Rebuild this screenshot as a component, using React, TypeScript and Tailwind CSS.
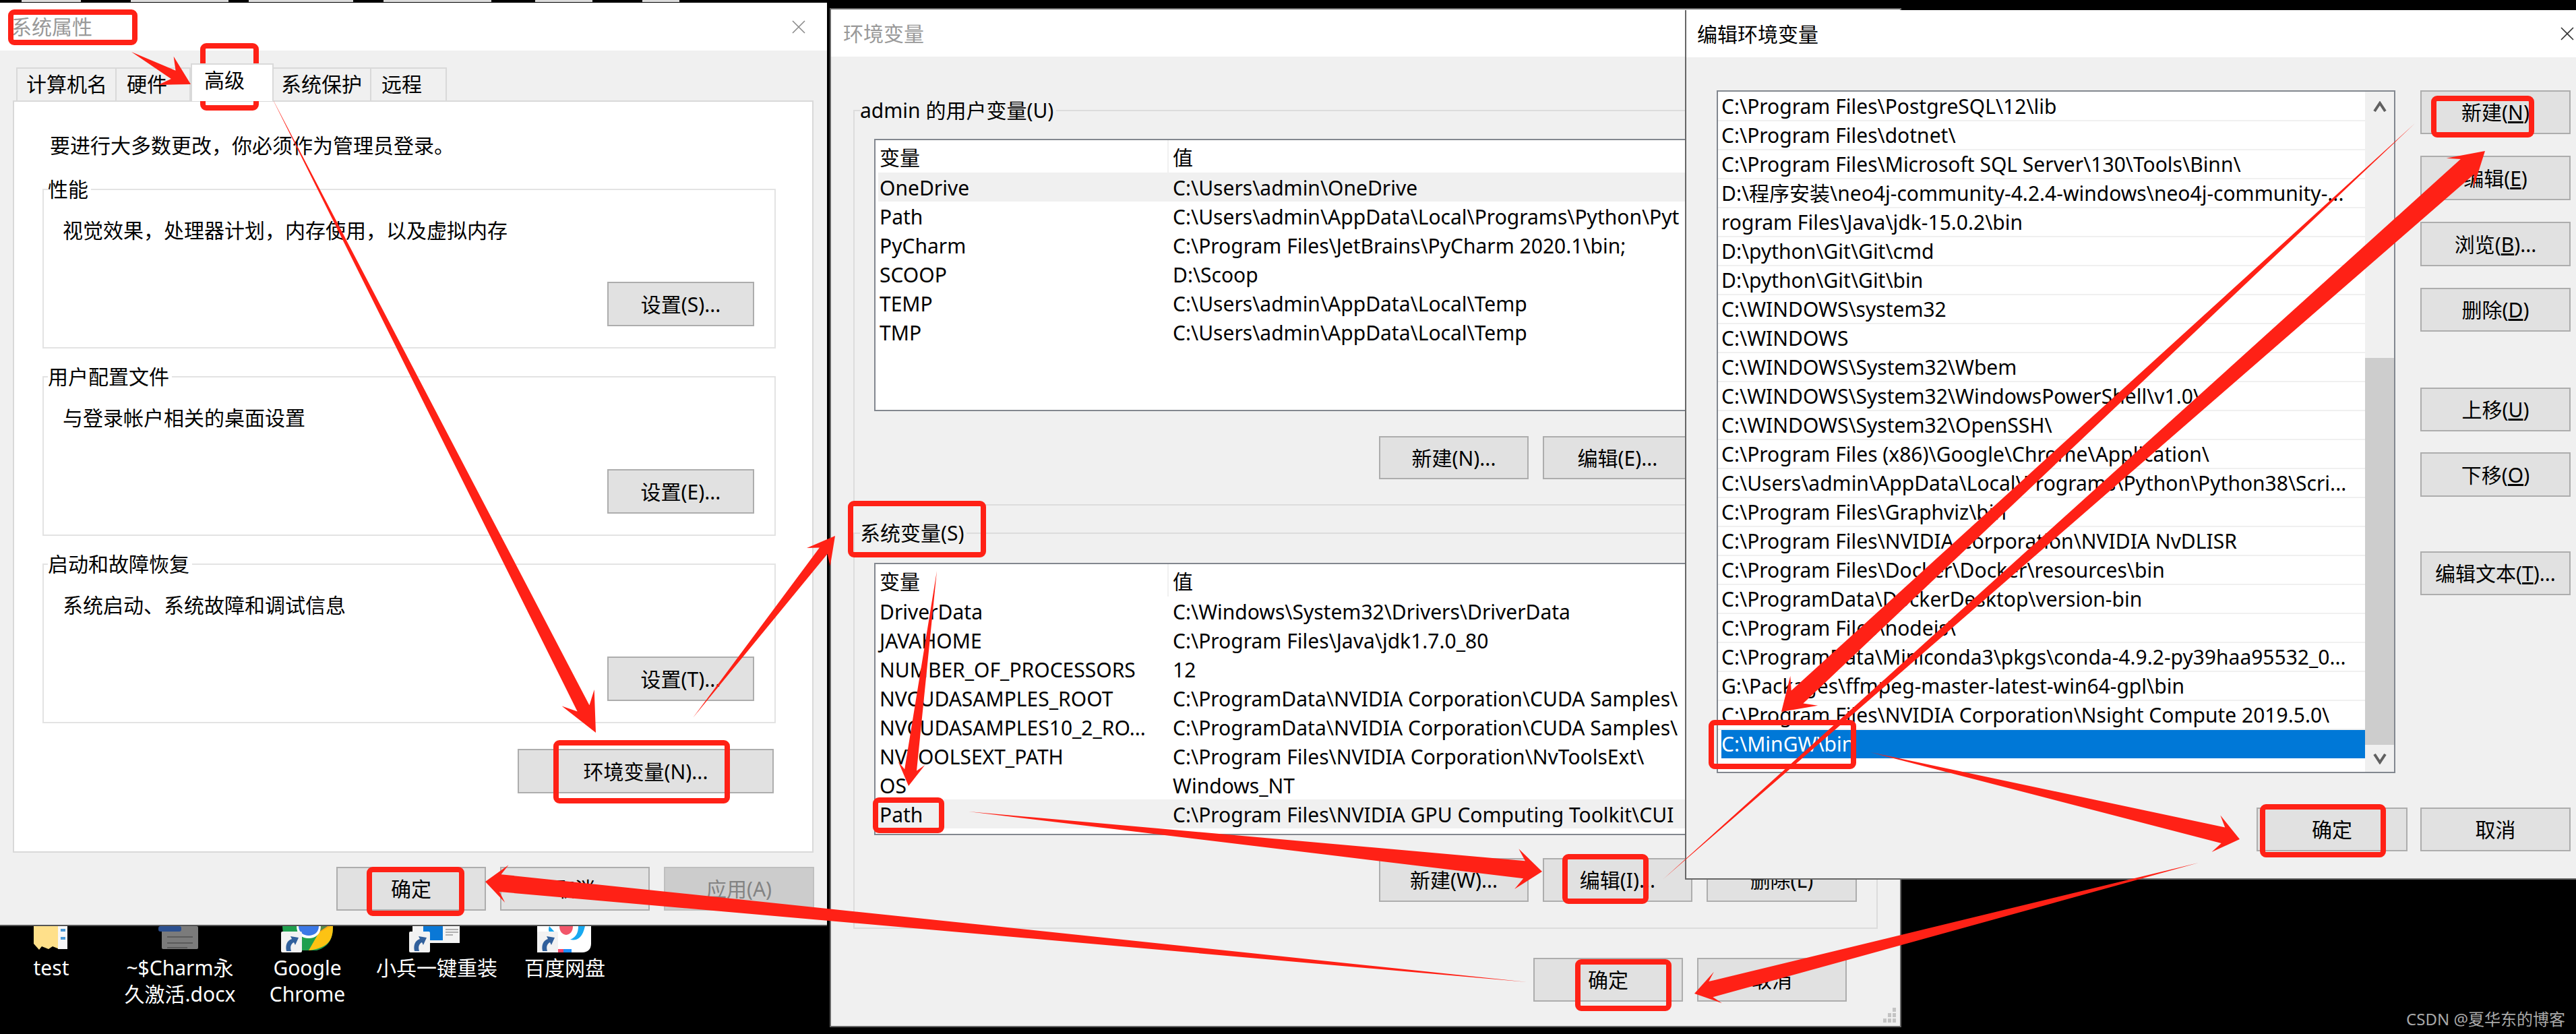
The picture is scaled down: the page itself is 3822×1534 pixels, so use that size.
import React from "react";

const RED = "#ff2116";

const Btn = ({ children, className = "", disabled = false }: { children: React.ReactNode; className?: string; disabled?: boolean }) => (
  <div
    className={`flex items-center justify-center shrink-0 border-2 whitespace-nowrap ${
      disabled ? "bg-[#cccccc] border-[#bfbfbf] text-[#838383]" : "bg-[#e1e1e1] border-[#adadad] text-black"
    } ${className}`}
  >
    {children}
  </div>
);

const Close = ({ className = "", color = "#8a8a8a" }: { className?: string; color?: string }) => (
  <svg viewBox="0 0 20 20" className={`w-5 h-5 ${className}`} fill="none" stroke={color} strokeWidth="1.6">
    <path d="M1 1 L19 19 M19 1 L1 19" />
  </svg>
);

const Group = ({ label, text, btn }: { label: string; text: string; btn: string }) => (
  <div className="relative h-[237px] w-[1088px] ml-[42px] border-2 border-[#e3e3e3] pt-[40px] pl-[28px] pr-[30px]">
    <div className="absolute -top-[23px] left-[6px] bg-white pr-1 leading-[44px] h-[44px]">{label}</div>
    <div className="leading-[40px] h-[40px]">{text}</div>
    <div className="flex justify-end mt-[56px]">
      <Btn className="w-[218px] h-[66px]">{btn}</Btn>
    </div>
  </div>
);

const SystemProps = () => (
  <div className="absolute left-0 top-[4px] w-[1227px] h-[1370px] bg-[#f0f0f0] border-b-2 border-[#555] flex flex-col">
    <div className="h-[71px] bg-white flex items-center justify-between pl-[17px] pr-[32px] text-[#999]">
      <span>系统属性</span>
      <Close />
    </div>
    <div className="flex mt-[25px] pl-[24px] h-[49px] items-end">
      <div className="w-[149px] h-[49px] border-2 border-b-0 border-[#d9d9d9] pl-[13px] leading-[46px]">计算机名</div>
      <div className="w-[110px] h-[49px] border-t-2 border-r-2 border-[#d9d9d9] pl-[15px] leading-[46px]">硬件</div>
      <div className="w-[123px] h-[56px] -mb-[1px] z-10 bg-white border-2 border-b-0 border-[#d9d9d9] pl-[18px] leading-[46px]">高级</div>
      <div className="w-[145px] h-[49px] border-t-2 border-r-2 border-[#d9d9d9] pl-[11px] leading-[46px]">系统保护</div>
      <div className="w-[112px] h-[49px] border-t-2 border-r-2 border-[#d9d9d9] pl-[15px] leading-[46px]">远程</div>
    </div>
    <div className="ml-[19px] w-[1188px] h-[1116px] bg-white border-2 border-[#d9d9d9] flex flex-col">
      <div className="mt-[43px] ml-[53px] h-[44px] leading-[44px]">要进行大多数更改，你必须作为管理员登录。</div>
      <div className="mt-[42px] flex flex-col gap-[41px]">
        <Group label="性能" text="视觉效果，处理器计划，内存使用，以及虚拟内存" btn="设置(S)..." />
        <Group label="用户配置文件" text="与登录帐户相关的桌面设置" btn="设置(E)..." />
        <Group label="启动和故障恢复" text="系统启动、系统故障和调试信息" btn="设置(T)..." />
      </div>
      <div className="flex justify-end mt-[38px] pr-[57px]">
        <Btn className="w-[380px] h-[66px]">环境变量(N)...</Btn>
      </div>
    </div>
    <div className="flex justify-end gap-[21px] mt-[21px] pr-[19px]">
      <Btn className="w-[222px] h-[65px]">确定</Btn>
      <Btn className="w-[222px] h-[65px]">取消</Btn>
      <Btn className="w-[223px] h-[65px]" disabled>应用(A)</Btn>
    </div>
  </div>
);

const VarTable = ({ rows, active }: { rows: [string, string][]; active: number }) => (
  <div className="ml-[29px] w-[1460px] h-[404px] bg-white border-2 border-[#82878f] overflow-hidden">
    <div className="flex h-[48px] leading-[52px]">
      <div className="w-[435px] pl-[6px] border-r-2 border-[#f0f0f0]">变量</div>
      <div className="pl-[6px]">值</div>
    </div>
    {rows.map(([name, value], i) => (
      <div key={name} className={`flex h-[43px] leading-[45px] ml-[4px] whitespace-nowrap ${i === active ? "bg-[#f0f0f0]" : ""}`}>
        <div className="w-[433px] pl-[2px] shrink-0">{name}</div>
        <div className="pl-[4px]">{value}</div>
      </div>
    ))}
  </div>
);

const userVars: [string, string][] = [
  ["OneDrive", "C:\\Users\\admin\\OneDrive"],
  ["Path", "C:\\Users\\admin\\AppData\\Local\\Programs\\Python\\Pyt"],
  ["PyCharm", "C:\\Program Files\\JetBrains\\PyCharm 2020.1\\bin;"],
  ["SCOOP", "D:\\Scoop"],
  ["TEMP", "C:\\Users\\admin\\AppData\\Local\\Temp"],
  ["TMP", "C:\\Users\\admin\\AppData\\Local\\Temp"],
];

const sysVars: [string, string][] = [
  ["DriverData", "C:\\Windows\\System32\\Drivers\\DriverData"],
  ["JAVAHOME", "C:\\Program Files\\Java\\jdk1.7.0_80"],
  ["NUMBER_OF_PROCESSORS", "12"],
  ["NVCUDASAMPLES_ROOT", "C:\\ProgramData\\NVIDIA Corporation\\CUDA Samples\\"],
  ["NVCUDASAMPLES10_2_RO...", "C:\\ProgramData\\NVIDIA Corporation\\CUDA Samples\\"],
  ["NVTOOLSEXT_PATH", "C:\\Program Files\\NVIDIA Corporation\\NvToolsExt\\"],
  ["OS", "Windows_NT"],
  ["Path", "C:\\Program Files\\NVIDIA GPU Computing Toolkit\\CUI"],
];

const EnvVars = () => (
  <div className="absolute left-[1233px] top-[14px] w-[1586px] h-[1508px] bg-[#f0f0f0] flex flex-col outline-2 outline-[#666]">
    <div className="h-[70px] bg-white flex items-center pl-[18px] text-[#999]">环境变量</div>
    <div className="relative ml-[33px] mt-[79px] w-[1520px] h-[587px] border-2 border-[#dcdcdc] pt-[41px]">
      <div className="absolute -top-[23px] left-[8px] bg-[#f0f0f0] pr-1 h-[44px] leading-[44px]">admin 的用户变量(U)</div>
      <VarTable rows={userVars} active={0} />
      <div className="flex gap-[21px] mt-[37px] pl-[778px]">
        <Btn className="w-[222px] h-[64px]">新建(N)...</Btn>
        <Btn className="w-[222px] h-[64px]">编辑(E)...</Btn>
      </div>
    </div>
    <div className="relative ml-[33px] mt-[40px] w-[1520px] h-[588px] border-2 border-[#dcdcdc] pt-[43px]">
      <div className="absolute -top-[23px] left-[8px] bg-[#f0f0f0] pr-1 h-[44px] leading-[44px]">系统变量(S)</div>
      <VarTable rows={sysVars} active={7} />
      <div className="flex gap-[21px] mt-[34px] pl-[778px]">
        <Btn className="w-[222px] h-[65px]">新建(W)...</Btn>
        <Btn className="w-[222px] h-[65px]">编辑(I)...</Btn>
        <Btn className="w-[223px] h-[65px]">删除(L)</Btn>
      </div>
    </div>
    <div className="flex justify-end gap-[21px] mt-[43px] pr-[79px]">
      <Btn className="w-[222px] h-[65px]">确定</Btn>
      <Btn className="w-[222px] h-[65px]">取消</Btn>
    </div>
    <svg viewBox="0 0 24 24" className="absolute right-[3px] bottom-[3px] w-[24px] h-[24px]" fill="#c4c4c4">
      <rect x="16" y="0" width="5" height="6" />
      <rect x="9" y="8" width="5" height="6" />
      <rect x="16" y="8" width="5" height="6" />
      <rect x="2" y="16" width="5" height="6" />
      <rect x="9" y="16" width="5" height="6" />
      <rect x="16" y="16" width="5" height="6" />
    </svg>
  </div>
);

const pathRows = [
  "C:\\Program Files\\PostgreSQL\\12\\lib",
  "C:\\Program Files\\dotnet\\",
  "C:\\Program Files\\Microsoft SQL Server\\130\\Tools\\Binn\\",
  "D:\\程序安装\\neo4j-community-4.2.4-windows\\neo4j-community-...",
  "rogram Files\\Java\\jdk-15.0.2\\bin",
  "D:\\python\\Git\\Git\\cmd",
  "D:\\python\\Git\\Git\\bin",
  "C:\\WINDOWS\\system32",
  "C:\\WINDOWS",
  "C:\\WINDOWS\\System32\\Wbem",
  "C:\\WINDOWS\\System32\\WindowsPowerShell\\v1.0\\",
  "C:\\WINDOWS\\System32\\OpenSSH\\",
  "C:\\Program Files (x86)\\Google\\Chrome\\Application\\",
  "C:\\Users\\admin\\AppData\\Local\\Programs\\Python\\Python38\\Scri...",
  "C:\\Program Files\\Graphviz\\bin",
  "C:\\Program Files\\NVIDIA Corporation\\NVIDIA NvDLISR",
  "C:\\Program Files\\Docker\\Docker\\resources\\bin",
  "C:\\ProgramData\\DockerDesktop\\version-bin",
  "C:\\Program Files\\nodejs\\",
  "C:\\ProgramData\\Miniconda3\\pkgs\\conda-4.9.2-py39haa95532_0...",
  "G:\\Packages\\ffmpeg-master-latest-win64-gpl\\bin",
  "C:\\Program Files\\NVIDIA Corporation\\Nsight Compute 2019.5.0\\",
  "C:\\MinGW\\bin",
];

const EditEnv = () => (
  <div className="absolute left-[2500px] top-[15px] w-[1322px] h-[1290px] bg-[#f0f0f0] border-l-2 border-b-2 border-[#666] flex flex-col">
    <div className="h-[70px] bg-white flex items-center justify-between pl-[16px] pr-[3px]">
      <span>编辑环境变量</span>
      <Close color="#333" />
    </div>
    <div className="flex mt-[49px] pl-[45px] gap-[37px] items-start">
      <div className="w-[1007px] h-[1013px] bg-white border-2 border-[#82878f] flex">
        <div className="flex-1 pt-[1px] overflow-hidden">
          {pathRows.map((row, i) => (
            <div
              key={row}
              className={
                i === pathRows.length - 1
                  ? "h-[42px] leading-[42px] ml-[5px] bg-[#0078d7] text-white whitespace-nowrap"
                  : "h-[43px] leading-[42px] pl-[5px] border-b-2 border-[#f0f0f0] whitespace-nowrap"
              }
            >
              {row}
            </div>
          ))}
        </div>
        <div className="w-[43px] bg-[#f0f0f0] flex flex-col items-center shrink-0">
          <svg viewBox="0 0 20 16" className="w-[20px] h-[16px] mt-[14px] mb-[365px] shrink-0" fill="none" stroke="#606060" strokeWidth="4">
            <path d="M2 15 L10 3 L18 15" />
          </svg>
          <div className="w-full h-[574px] bg-[#cdcdcd] shrink-0" />
          <svg viewBox="0 0 20 16" className="w-[20px] h-[16px] mt-[13px] shrink-0" fill="none" stroke="#606060" strokeWidth="4">
            <path d="M2 1 L10 13 L18 1" />
          </svg>
        </div>
      </div>
      <div className="flex flex-col w-[223px]">
        <Btn className="h-[65px]">新建(<u>N</u>)</Btn>
        <Btn className="h-[66px] mt-[32px]">编辑(<u>E</u>)</Btn>
        <Btn className="h-[66px] mt-[32px]">浏览(<u>B</u>)...</Btn>
        <Btn className="h-[65px] mt-[32px]">删除(<u>D</u>)</Btn>
        <Btn className="h-[65px] mt-[83px]">上移(<u>U</u>)</Btn>
        <Btn className="h-[66px] mt-[31px]">下移(<u>O</u>)</Btn>
        <Btn className="h-[65px] mt-[81px]">编辑文本(<u>T</u>)...</Btn>
      </div>
    </div>
    <div className="flex justify-end gap-[19px] mt-[51px] pr-[8px]">
      <Btn className="w-[224px] h-[65px]">确定</Btn>
      <Btn className="w-[223px] h-[65px]">取消</Btn>
    </div>
  </div>
);

const Shortcut = ({ x, y }: { x: number; y: number }) => (
  <g transform={`translate(${x} ${y})`}>
    <rect width="31" height="31" rx="2" fill="#f2f2f2" />
    <path d="M8 29 C6 20 9 13 16 11 L14 7 L26 9 L21 20 L19 16 C15 18 13 22 15 29 Z" fill="#31609c" />
  </g>
);

const DesktopIcons = () => (
  <svg viewBox="0 0 900 60" className="absolute left-0 top-[1370px] w-[900px] h-[60px]">
    {/* folder */}
    <path d="M50 4 H88 V38 L78 34 L72 38 L62 34 L58 39 L50 30 Z" fill="#ffe08a" />
    <rect x="86" y="4" width="14" height="34" fill="#f7f7f7" />
    <rect x="90" y="8" width="7" height="4" fill="#4a9ad8" />
    <rect x="90" y="20" width="7" height="4" fill="#4a9ad8" />
    {/* doc */}
    <rect x="240" y="4" width="54" height="34" rx="2" fill="#7b7b7b" />
    <rect x="235" y="4" width="34" height="8" rx="3" fill="#2b4f8f" />
    <path d="M248 20 H286 M248 29 H286 M248 36 H278" stroke="#5a5a5a" strokeWidth="2" />
    {/* chrome */}
    <path d="M419 4 H494 C494 20 490 34 470 40 L440 40 C428 30 419 20 419 4 Z" fill="#1f9f4e" />
    <path d="M494 4 C494 24 488 36 458 40 L474 12 L486 4 Z" fill="#fdc313" />
    <path d="M440 4 L490 4 L473 14 L452 14 Z" fill="#ea4335" opacity="0.25" />
    <path d="M440 4 H476 C476 16 468 22 458 22 C448 22 440 16 440 4 Z" fill="#fff" />
    <path d="M443 4 H473 C473 13 466 18 458 18 C450 18 443 13 443 4 Z" fill="#3b78e7" />
    <Shortcut x={417} y={12} />
    {/* xiaobing */}
    <rect x="612" y="4" width="70" height="25" fill="#f3f3f3" />
    <rect x="628" y="4" width="29" height="21" fill="#0a78d6" />
    <path d="M661 9 H680 M661 13 H680 M661 17 H672" stroke="#b0b0b0" strokeWidth="2" />
    <Shortcut x={607} y={12} />
    {/* baidu */}
    <path d="M797 4 H877 V30 C877 38 872 43 864 43 H797 Z" fill="#fff" />
    <path d="M815 4 C812 12 816 18 826 16 M858 4 C858 12 856 20 846 24 C856 26 864 22 868 4 Z" fill="#17a9f0" />
    <path d="M830 4 H850 C850 12 846 16 840 17 C834 16 830 12 830 4 Z" fill="#f2566a" />
    <rect x="828" y="38" width="8" height="5" fill="#ff4466" />
    <rect x="836" y="38" width="12" height="5" fill="#1e90ff" />
    <Shortcut x={797} y={12} />
  </svg>
);

const desktopLabels = [
  { left: "left-[0px] w-[152px]", lines: ["test"] },
  { left: "left-[172px] w-[190px]", lines: ["~$Charm永", "久激活.docx"] },
  { left: "left-[361px] w-[190px]", lines: ["Google", "Chrome"] },
  { left: "left-[553px] w-[190px]", lines: ["小兵一键重装"] },
  { left: "left-[743px] w-[190px]", lines: ["百度网盘"] },
];

type Pt = [number, number];

// tapered hand-drawn style arrow: thin at the tail, wide at the neck, swept barbs
const arrowPoints = (tail: Pt, tip: Pt, neck: number, half: number, len: number, back = 0.7) => {
  const dx = tip[0] - tail[0];
  const dy = tip[1] - tail[1];
  const d = Math.hypot(dx, dy);
  const ux = dx / d;
  const uy = dy / d;
  const px = -uy;
  const py = ux;
  const at = (along: number, side: number) => [tip[0] - ux * along + px * side, tip[1] - uy * along + py * side].join(",");
  return [
    tail.join(","),
    at(len * back, neck / 2),
    at(len, half),
    tip.join(","),
    at(len, -half),
    at(len * back, -neck / 2),
  ].join(" ");
};

const arrows: { tail: Pt; tip: Pt; neck: number; half: number; len: number }[] = [
  { tail: [195, 77], tip: [283, 125], neck: 14, half: 24, len: 42 },
  { tail: [402, 142], tip: [884, 1087], neck: 20, half: 27, len: 58 },
  { tail: [1028, 1065], tip: [1239, 795], neck: 15, half: 22, len: 40 },
  { tail: [1390, 847], tip: [1348, 1166], neck: 18, half: 20, len: 34 },
  { tail: [1437, 1204], tip: [2288, 1293], neck: 26, half: 30, len: 38 },
  { tail: [2468, 1304], tip: [3687, 224], neck: 30, half: 30, len: 50 },
  { tail: [3583, 183], tip: [2643, 1056], neck: 26, half: 30, len: 46 },
  { tail: [2775, 1116], tip: [3323, 1245], neck: 24, half: 28, len: 36 },
  { tail: [3262, 1280], tip: [2514, 1474], neck: 24, half: 24, len: 36 },
  { tail: [2266, 1457], tip: [720, 1308], neck: 26, half: 28, len: 32 },
];

const boxes: [number, number, number, number][] = [
  [12, 14, 204, 67],
  [297, 64, 384, 164],
  [821, 1098, 1083, 1192],
  [544, 1286, 689, 1359],
  [1258, 743, 1463, 827],
  [1295, 1183, 1401, 1236],
  [2318, 1267, 2446, 1341],
  [2337, 1423, 2480, 1500],
  [3607, 142, 3760, 204],
  [2535, 1068, 2754, 1141],
  [3353, 1193, 3540, 1272],
];

const Annotations = () => (
  <svg viewBox="0 0 3822 1534" className="absolute inset-0 w-[3822px] h-[1534px] pointer-events-none">
    {boxes.map(([x1, y1, x2, y2]) => (
      <rect key={`${x1}-${y1}`} x={x1 + 4} y={y1 + 4} width={x2 - x1 - 8} height={y2 - y1 - 8} rx="5" fill="none" stroke={RED} strokeWidth="8" />
    ))}
    {arrows.map((a) => (
      <polygon key={`${a.tail[0]}-${a.tail[1]}`} points={arrowPoints(a.tail, a.tip, a.neck, a.half, a.len)} fill={RED} />
    ))}
  </svg>
);

export default function App() {
  return (
    <div className="relative w-[3822px] h-[1534px] bg-black overflow-hidden text-[30px] text-black font-['Noto_Sans','Noto_Sans_CJK_SC',sans-serif]">
      {/* slivers of the desktop row cut off along the top edge */}
      <div className="absolute top-0 left-[32px] h-[3px] flex gap-[74px]">
        <div className="w-[88px] bg-[#ddd]" />
        <div className="w-[145px] bg-[#ddd]" />
        <div className="w-[155px] -ml-[44px] bg-[#ddd]" />
        <div className="w-[160px] -ml-[29px] bg-[#ddd]" />
        <div className="w-[85px] -ml-[9px] bg-[#ddd]" />
        <div className="w-[55px] bg-[#ddd]" />
      </div>
      <DesktopIcons />
      {desktopLabels.map((d) => (
        <div key={d.lines[0]} className={`absolute top-[1416px] ${d.left} text-center text-white leading-[39px]`}>
          {d.lines.map((l) => (
            <div key={l}>{l}</div>
          ))}
        </div>
      ))}
      <SystemProps />
      <EnvVars />
      <EditEnv />
      <Annotations />
      <div className="absolute right-[16px] top-[1494px] text-[24px] leading-[36px] text-[#a8a8a8] whitespace-nowrap">CSDN @夏华东的博客</div>
    </div>
  );
}
